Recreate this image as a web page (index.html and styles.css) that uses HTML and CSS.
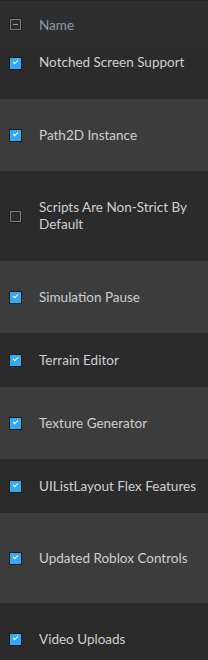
FILE: index.html
```html
<!DOCTYPE html>
<html lang="en">
<head>
  <meta charset="UTF-8">
  <title>Beta Features</title>
  <link rel="stylesheet" href="styles.css">
</head>
<body>
  <div class="list">
    <div class="head">
      <span class="box mixed"></span>
      <span class="name">Name</span>
    </div>
    <div class="row dark first"><span class="box on"></span><span class="label">Notched Screen Support</span></div>
    <div class="row light tall"><span class="box on"></span><span class="label">Path2D Instance</span></div>
    <div class="row dark huge"><span class="box"></span><span class="label">Scripts Are Non-Strict By Default</span></div>
    <div class="row light tall"><span class="box on"></span><span class="label">Simulation Pause</span></div>
    <div class="row dark"><span class="box on"></span><span class="label">Terrain Editor</span></div>
    <div class="row light tall"><span class="box on"></span><span class="label">Texture Generator</span></div>
    <div class="row dark"><span class="box on"></span><span class="label">UIListLayout Flex Features</span></div>
    <div class="row light huge"><span class="box on"></span><span class="label">Updated Roblox Controls</span></div>
    <div class="row dark tall"><span class="box on"></span><span class="label">Video Uploads</span></div>
  </div>
</body>
</html>
```

FILE: styles.css
```css
body {
  margin: 0;
  padding: 0;
  background: #2b2b2b;
  font-family: Lato, sans-serif;
  font-size: 13.5px;
  overflow: hidden;
}
.list {
  width: 208px;
}
.head {
  height: 48px;
  display: flex;
  align-items: center;
  background: #2e2e2e;
  border-top: 1px solid #262626;
  box-sizing: border-box;
}
.name {
  color: #8d9ba6;
}
.row {
  display: flex;
  align-items: center;
  height: 54px;
  color: #cfcfcf;
}
.row.first {
  height: 51px;
  align-items: flex-start;
  padding-top: 6px;
  box-sizing: border-box;
}
.row.tall {
  height: 72px;
}
.row.huge {
  height: 90px;
}
.dark {
  background: #2b2b2b;
}
.light {
  background: #3c3c3c;
}
.label {
  line-height: 17px;
  padding-right: 6px;
}
.box {
  flex: none;
  width: 9px;
  height: 9px;
  margin: 0 18px 0 10px;
  border: 1px solid #7d7d7d;
  background: #2b2b2b;
  box-shadow: 0 0 0 1px #1e1e1e;
  position: relative;
}
.row.first .box {
  margin-top: 4px;
}
.box.mixed::after {
  content: "";
  position: absolute;
  left: 2px;
  top: 4px;
  width: 5px;
  height: 1px;
  background: #9a9a9a;
}
.box.on {
  background: #35a8f5;
  border-color: #35a8f5;
}
.box.on::after {
  content: "";
  position: absolute;
  left: 2px;
  top: 1px;
  width: 4px;
  height: 2px;
  border-left: 1.5px solid #fff;
  border-bottom: 1.5px solid #fff;
  transform: rotate(-45deg);
}
```
